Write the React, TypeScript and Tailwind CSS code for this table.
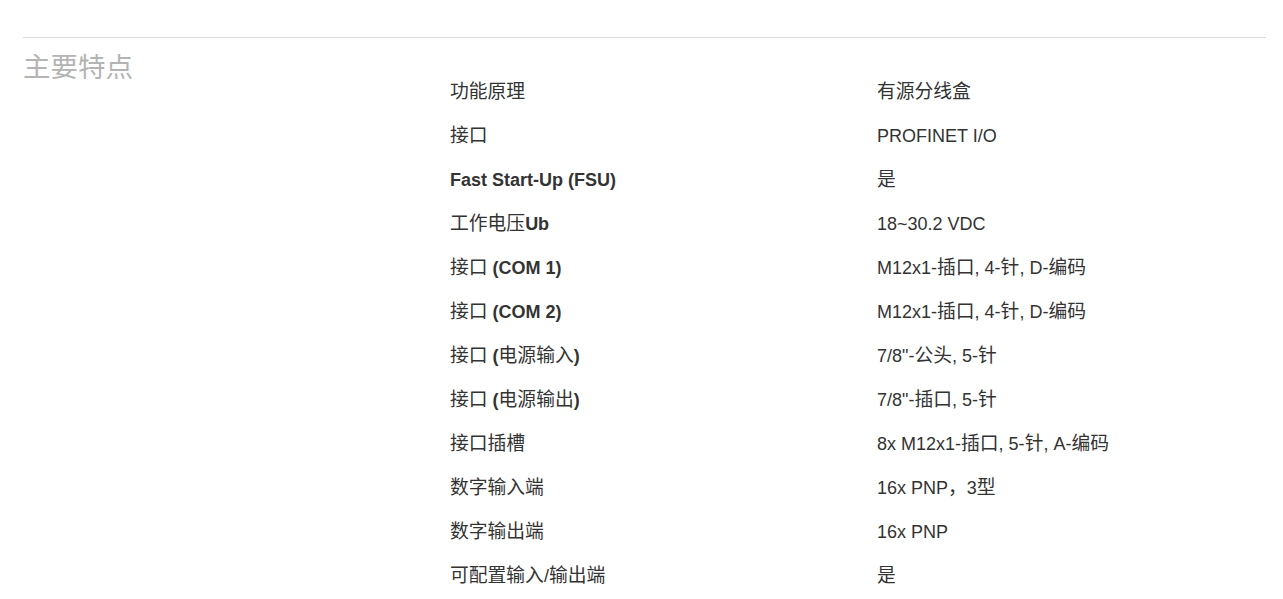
import React from 'react';

// CJK runs render a touch wider in the reference, so give them their own size
function Txt({ s, bold }: { s: string; bold?: boolean }) {
    const parts = s.split(/([\u3000-\u9fff\uff00-\uffef]+)/);
    return (
        <span className={bold ? 'font-bold' : ''}>
            {parts.map((p, i) =>
                /[\u3000-\u9fff\uff00-\uffef]/.test(p) ? (
                    <span key={i} className="text-[18.8px] font-normal">
                        {p}
                    </span>
                ) : (
                    <React.Fragment key={i}>{p}</React.Fragment>
                )
            )}
        </span>
    );
}

type Seg = [string, boolean?];

const rows: { label: Seg[]; value: string }[] = [
    { label: [['功能原理']], value: '有源分线盒' },
    { label: [['接口']], value: 'PROFINET I/O' },
    { label: [['Fast Start-Up (FSU)', true]], value: '是' },
    { label: [['工作电压'], ['Ub', true]], value: '18~30.2 VDC' },
    { label: [['接口 '], ['(COM 1)', true]], value: 'M12x1-插口, 4-针, D-编码' },
    { label: [['接口 '], ['(COM 2)', true]], value: 'M12x1-插口, 4-针, D-编码' },
    { label: [['接口 '], ['(', true], ['电源输入'], [')', true]], value: '7/8"-公头, 5-针' },
    { label: [['接口 '], ['(', true], ['电源输出'], [')', true]], value: '7/8"-插口, 5-针' },
    { label: [['接口插槽']], value: '8x M12x1-插口, 5-针, A-编码' },
    { label: [['数字输入端']], value: '16x PNP，3型' },
    { label: [['数字输出端']], value: '16x PNP' },
    { label: [['可配置输入/输出端']], value: '是' },
];

export default function App() {
    return (
        <div
            className="min-h-screen bg-white px-[23px] pt-[37px]"
            style={{ fontFamily: '"Liberation Sans", "Noto Sans CJK SC", sans-serif' }}
        >
            <div className="w-[1243px] border-t border-[#dcdcdc]">
                <div className="flex">
                    {/* section title */}
                    <div className="w-[427px] pt-[14px]">
                        <h2 className="text-[27.5px] leading-[32px] text-[#b4b4b4]">主要特点</h2>
                    </div>
                    {/* spec table */}
                    <div className="flex-1 pt-[32px]">
                        {rows.map((r, i) => (
                            <div key={i} className="flex h-[44px] items-center text-[18px] text-[#333]">
                                <div className="w-[427px]">
                                    {r.label.map(([t, b], j) => (
                                        <Txt key={j} s={t} bold={b} />
                                    ))}
                                </div>
                                <div className="flex-1">
                                    <Txt s={r.value} />
                                </div>
                            </div>
                        ))}
                    </div>
                </div>
            </div>
        </div>
    );
}
